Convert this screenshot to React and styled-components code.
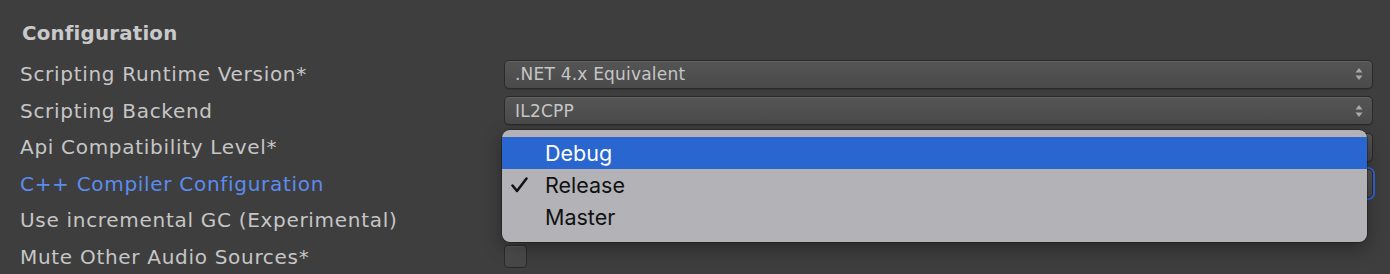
import React from 'react';
import styled, { createGlobalStyle } from 'styled-components';

const GlobalStyle = createGlobalStyle`
  html, body {
    margin: 0;
    padding: 0;
    background: #3e3e3e;
  }
  body {
    font-family: 'DejaVu Sans', 'Liberation Sans', sans-serif;
  }
`;

const Panel = styled.div`
  position: relative;
  width: 1390px;
  height: 274px;
  overflow: hidden;
  background: #3e3e3e;
  padding: 0 17px 0 20px;
  box-sizing: border-box;
`;

const Header = styled.div`
  height: 56px;
  padding: 11px 0 0 2px;
  display: flex;
  align-items: center;
  box-sizing: border-box;
  font-weight: bold;
  font-size: 19.8px;
  color: #c9c9c9;
  letter-spacing: 0.2px;
`;

const Rows = styled.div`
  display: grid;
  grid-template-columns: 484px 1fr;
  grid-auto-rows: 36.5px;
  align-items: center;
`;

const Label = styled.div`
  font-size: 20px;
  letter-spacing: 0.7px;
  color: ${(props) => (props.active ? '#5b8cef' : '#c6c6c6')};
  white-space: nowrap;
`;

const Field = styled.div`
  display: flex;
  align-items: center;
`;

const Select = styled.div`
  flex: 1;
  height: 29px;
  box-sizing: border-box;
  border-radius: 5px;
  border: 1px solid #2a2a2a;
  box-shadow: inset 0 1px 0 #626262,
    ${(props) => (props.focused ? '0 0 0 2px #3560d6' : '0 1px 0 #353535')};
  background: linear-gradient(#555555, #4a4a4a);
  display: flex;
  align-items: center;
  justify-content: space-between;
  padding: 0 9px 0 10px;
  font-size: 17px;
  color: #c6c6c6;
  letter-spacing: 0.2px;
`;

const Arrows = styled.svg`
  width: 8px;
  height: 14px;
  display: block;
`;

const Checkbox = styled.div`
  width: 23px;
  height: 23px;
  box-sizing: border-box;
  border-radius: 4px;
  border: 1px solid #2a2a2a;
  box-shadow: inset 0 1px 0 #5e5e5e;
  background: linear-gradient(#4f4f4f, #464646);
`;

const Menu = styled.div`
  position: absolute;
  left: 502px;
  top: 130px;
  width: 865px;
  height: 112px;
  box-sizing: border-box;
  padding-top: 7px;
  border-radius: 8px;
  background: #b3b3b7;
  box-shadow: 0 0 0 0.5px rgba(0, 0, 0, 0.5), 0 6px 18px rgba(0, 0, 0, 0.35);
`;

const MenuItem = styled.div`
  height: 32px;
  display: flex;
  align-items: center;
  font-family: Inter, 'Liberation Sans', sans-serif;
  font-size: 21.5px;
  color: ${(props) => (props.highlighted ? '#ffffff' : '#111111')};
  background: ${(props) => (props.highlighted ? '#2966d0' : 'transparent')};
`;

const CheckSlot = styled.div`
  width: 43px;
  display: flex;
  justify-content: flex-end;
  padding-right: 17px;
  box-sizing: border-box;
`;

function SelectArrows() {
  return (
    <Arrows viewBox="0 0 8 14">
      <path d="M4 1 L7.5 5.5 H0.5 Z" fill="#a9a9a9" />
      <path d="M4 13 L7.5 8.5 H0.5 Z" fill="#a9a9a9" />
    </Arrows>
  );
}

function Check() {
  return (
    <svg width="17" height="16" viewBox="0 0 17 16">
      <path
        d="M1.5 8.5 L6 14 L15.5 1.5"
        fill="none"
        stroke="#111"
        strokeWidth="2.5"
        strokeLinecap="round"
        strokeLinejoin="round"
      />
    </svg>
  );
}

// values of the fields hidden under the open menu are left blank
const rows = [
  { label: 'Scripting Runtime Version*', value: '.NET 4.x Equivalent' },
  { label: 'Scripting Backend', value: 'IL2CPP' },
  { label: 'Api Compatibility Level*', value: '' },
  { label: 'C++ Compiler Configuration', value: '', active: true },
  { label: 'Use incremental GC (Experimental)', checkbox: true },
  { label: 'Mute Other Audio Sources*', checkbox: true },
];

const options = ['Debug', 'Release', 'Master'];

export default function App() {
  return (
    <Panel>
      <GlobalStyle />
      <Header>Configuration</Header>
      <Rows>
        {rows.map((row) => (
          <React.Fragment key={row.label}>
            <Label active={row.active}>{row.label}</Label>
            <Field>
              {row.checkbox ? (
                <Checkbox />
              ) : (
                <Select focused={row.active}>
                  <span>{row.value}</span>
                  <SelectArrows />
                </Select>
              )}
            </Field>
          </React.Fragment>
        ))}
      </Rows>
      <Menu>
        {options.map((opt, i) => (
          <MenuItem key={opt} highlighted={i === 0}>
            <CheckSlot>{opt === 'Release' ? <Check /> : null}</CheckSlot>
            {opt}
          </MenuItem>
        ))}
      </Menu>
    </Panel>
  );
}
